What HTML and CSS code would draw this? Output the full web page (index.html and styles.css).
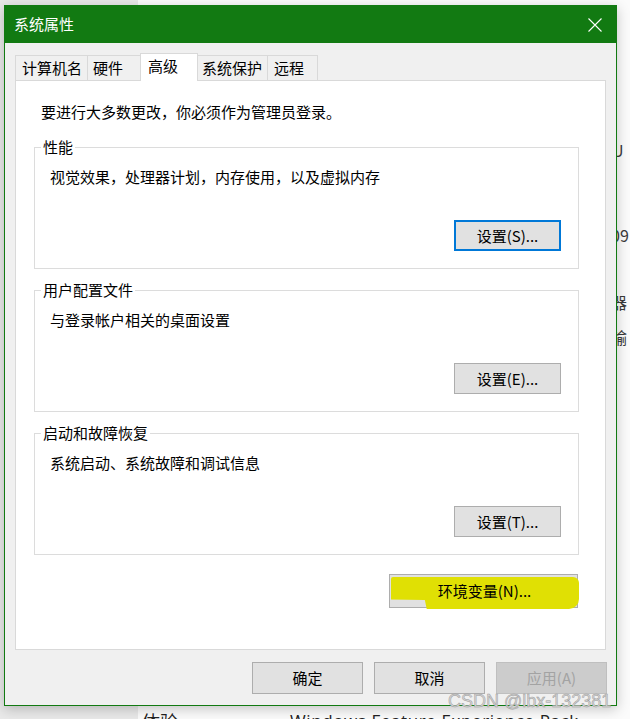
FILE: index.html
```html
<!DOCTYPE html>
<html lang="zh-CN">
<head>
<meta charset="utf-8">
<title>系统属性</title>
<link rel="stylesheet" href="styles.css">
</head>
<body>
<div class="desk">
  <div class="desk-left"></div>
  <span class="frag frag-u">U</span>
  <span class="frag frag-09">09</span>
  <span class="frag frag-qi">器</span>
  <span class="frag frag-shu">输</span>
  <div class="desk-bottom">
    <span class="db-a">体验</span>
    <span class="db-b">Windows Feature Experience Pack</span>
  </div>
</div>

<div class="dialog">
  <div class="titlebar">
    <span class="title">系统属性</span>
    <svg class="close" width="14" height="14" viewBox="0 0 14 14" aria-hidden="true">
      <path d="M0.5 0.5 L13.5 13.5 M13.5 0.5 L0.5 13.5" stroke="#ffffff" stroke-width="1.1" fill="none"/>
    </svg>
  </div>
  <div class="body">
    <div class="tabs">
      <div class="tab t1">计算机名</div>
      <div class="tab t2">硬件</div>
      <div class="tab t3 sel">高级</div>
      <div class="tab t4">系统保护</div>
      <div class="tab t5">远程</div>
    </div>
    <div class="panel">
      <div class="intro">要进行大多数更改，你必须作为管理员登录。</div>

      <div class="group">
        <span class="legend">性能</span>
        <div class="desc">视觉效果，处理器计划，内存使用，以及虚拟内存</div>
        <div class="btn-row"><button class="btn btn-default">设置(S)...</button></div>
      </div>

      <div class="group">
        <span class="legend">用户配置文件</span>
        <div class="desc">与登录帐户相关的桌面设置</div>
        <div class="btn-row"><button class="btn">设置(E)...</button></div>
      </div>

      <div class="group">
        <span class="legend">启动和故障恢复</span>
        <div class="desc">系统启动、系统故障和调试信息</div>
        <div class="btn-row"><button class="btn">设置(T)...</button></div>
      </div>

      <div class="env-row">
        <button class="btn btn-env"><span class="marker"></span><span class="env-label">环境变量(N)...</span></button>
      </div>
    </div>
    <div class="actions">
      <button class="btn btn-act">确定</button>
      <button class="btn btn-act">取消</button>
      <button class="btn btn-act btn-disabled">应用(A)</button>
    </div>
  </div>
</div>

<div class="watermark">CSDN @lbx-132381</div>
</body>
</html>
```

FILE: styles.css
```css
* { box-sizing: border-box; }

html, body {
  margin: 0;
  padding: 0;
}

body {
  width: 630px;
  height: 719px;
  overflow: hidden;
  position: relative;
  background: #fbfbfb;
  font-family: "Noto Sans CJK SC", "Noto Sans", sans-serif;
  font-size: 15px;
  color: #000;
}

/* ---------- desktop behind the dialog ---------- */
.desk {
  position: absolute;
  inset: 0;
}
.desk-left {
  position: absolute;
  left: 0;
  top: 0;
  width: 138px;
  height: 719px;
  background: #e9e9e9;
}
.frag {
  position: absolute;
  font-family: "Noto Sans CJK SC", "Noto Sans", sans-serif;
  font-size: 16px;
  line-height: 20px;
  color: #3a3a3a;
}
.frag-u { left: 612px; top: 140px; }
.frag-09 { left: 611px; top: 225px; }
.frag-qi { left: 611px; top: 292px; }
.frag-shu { left: 611px; top: 327px; }

.desk-bottom {
  position: absolute;
  left: 142px;
  top: 709px;
  display: flex;
  gap: 112px;
  font-size: 18px;
  line-height: 24px;
  color: #222;
  white-space: nowrap;
}
.db-b { font-family: "Open Sans", "Noto Sans", sans-serif; font-size: 17px; letter-spacing: 0.6px; }

/* ---------- dialog window ---------- */
.dialog {
  position: absolute;
  left: 4px;
  top: 5px;
  width: 613px;
  height: 701px;
  border: 1px solid #127a12;
  background: #f0f0f0;
  box-shadow: 0 3px 12px rgba(0, 0, 0, 0.22);
  display: flex;
  flex-direction: column;
}

.titlebar {
  height: 37px;
  background: #127a12;
  display: flex;
  align-items: center;
  justify-content: space-between;
  padding: 0 14px 0 9px;
}
.title {
  color: #fff;
  font-size: 15px;
  line-height: 20px;
  margin-top: -1px;
}
.close { display: block; }

.body {
  flex: 1;
  padding: 10px 9px 11px 10px;
  display: flex;
  flex-direction: column;
}

/* ---------- tabs ---------- */
.tabs {
  display: flex;
  align-items: flex-end;
  height: 28px;
  margin-bottom: -1px;
  position: relative;
  z-index: 1;
}
.tab {
  height: 25px;
  margin-bottom: 1px;
  border: 1px solid #d9d9d9;
  border-bottom: none;
  background: #f0f0f0;
  line-height: 24px;
  white-space: nowrap;
  color: #000;
}
.tab + .tab { margin-left: -1px; }
.tab.sel {
  height: 28px;
  margin-bottom: 0;
  background: #fff;
  position: relative;
  z-index: 2;
}
.t1 { width: 73px; padding-left: 6px; }
.t2 { width: 54px; padding-left: 5px; }
.t3 { width: 58px; padding-left: 7px; }
.t4 { width: 71px; padding-left: 4px; }
.t5 { width: 51px; padding-left: 6px; }

/* ---------- panel ---------- */
.panel {
  width: 591px;
  height: 570px;
  border: 1px solid #d9d9d9;
  background: #fff;
  padding: 21px 0 0 18px;
}
.intro {
  line-height: 20px;
  margin-left: 7px;
}

.group {
  width: 545px;
  height: 122px;
  border: 1px solid #dcdcdc;
  margin-top: 25px;
  padding: 0 17px 17px 15px;
  display: flex;
  flex-direction: column;
  align-items: flex-start;
}
.group + .group { margin-top: 21px; }
.legend {
  margin-top: -11px;
  margin-left: -9px;
  padding: 0 2px;
  background: #fff;
  line-height: 20px;
}
.desc {
  margin-top: 10px;
  line-height: 20px;
}
.btn-row {
  margin-top: auto;
  align-self: stretch;
  display: flex;
  justify-content: flex-end;
}

/* ---------- buttons ---------- */
.btn {
  font-family: "Noto Sans CJK SC", "Noto Sans", sans-serif;
  font-size: 15px;
  line-height: 20px;
  color: #000;
  background: #e1e1e1;
  border: 1px solid #adadad;
  padding: 0;
  margin: 0;
  width: 107px;
  height: 31px;
  display: flex;
  align-items: center;
  justify-content: center;
}
.btn-default {
  border: 2px solid #0078d7;
}

.env-row {
  width: 545px;
  display: flex;
  justify-content: flex-end;
  padding-right: 1px;
  margin-top: 19px;
}
.btn-env {
  width: 189px;
  height: 34px;
  position: relative;
  overflow: visible;
}
.marker {
  position: absolute;
  left: 1px;
  top: 2px;
  width: 188px;
  height: 32px;
  background: #e0e004;
  border-radius: 2px 6px 10px 4px;
  clip-path: polygon(0 0, 100% 0, 100% 100%, 19% 100%, 18% 72%, 0 70%);
  filter: blur(0.4px);
}
.env-label {
  position: relative;
  z-index: 1;
  margin-left: 2px;
  margin-top: -1px;
}

.actions {
  margin-top: 12px;
  display: flex;
  justify-content: flex-end;
  gap: 11px;
}
.btn-act {
  width: 111px;
  height: 32px;
}
.btn-disabled {
  background: #cccccc;
  border-color: #bfbfbf;
  color: #a3a3a3;
}

/* ---------- watermark ---------- */
.watermark {
  position: absolute;
  left: 448px;
  top: 690px;
  font-family: "Liberation Sans", Arial, sans-serif;
  font-size: 18px;
  line-height: 22px;
  color: #d6d6d6;
  -webkit-text-stroke: 0.5px #9c9c9c;
  white-space: nowrap;
  z-index: 5;
}
```
